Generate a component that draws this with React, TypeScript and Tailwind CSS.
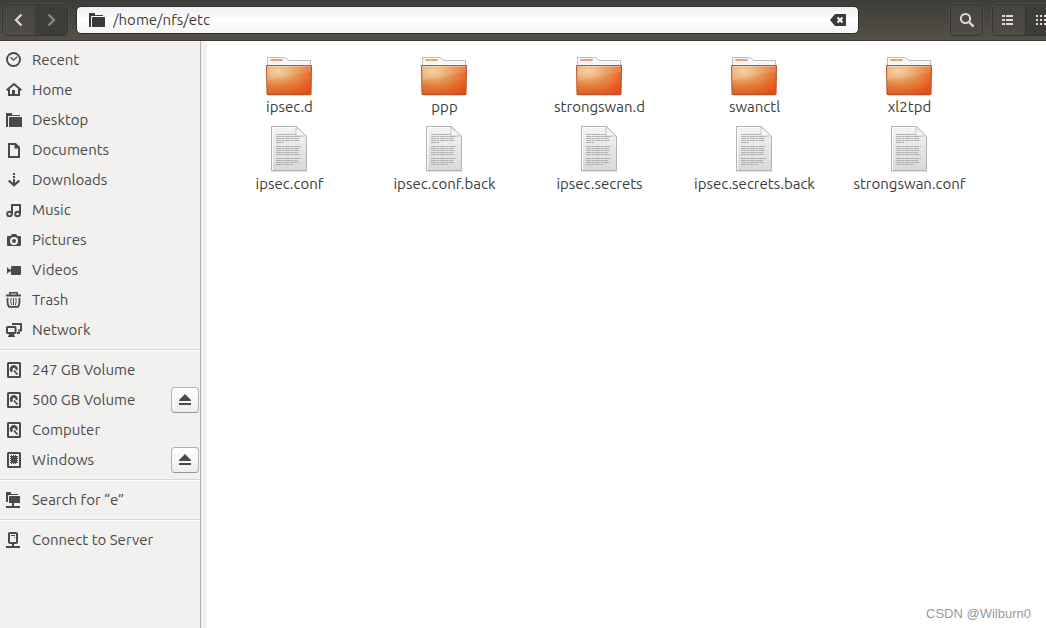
import type { ReactNode } from "react";

const INK = "#4a4a4a";

function Glyph({ children }: { children: ReactNode }) {
  return (
    <svg width="16" height="16" viewBox="0 0 16 16" fill="currentColor" className="shrink-0" aria-hidden="true">
      {children}
    </svg>
  );
}

const FolderShape = () => (
  <>
    <path d="M0 1.5Q0 1 .5 1H5.5L6 1.5V3H13.5Q14 3 14 3.5V4H3Q2 4 2 5V15H.5Q0 15 0 14.5Z" />
    <rect x="3" y="5" width="13" height="10" rx=".6" />
  </>
);

const icons = {
  recent: (
    <Glyph>
      <circle cx="7.5" cy="7.5" r="6.5" fill="none" stroke="currentColor" strokeWidth="1.9" />
      <path d="M4.5 5.2 7.5 8.2 11.2 4.8" fill="none" stroke="currentColor" strokeWidth="1.3" />
    </Glyph>
  ),
  home: (
    <Glyph>
      <path d="M.6 8.2 8 2l7.4 6.2" fill="none" stroke="currentColor" strokeWidth="2" />
      <path d="M2 7h2v5h2V8h3v4h3V7h2v7H2z" />
    </Glyph>
  ),
  folder: (
    <Glyph>
      <FolderShape />
    </Glyph>
  ),
  documents: (
    <Glyph>
      <path d="M3 2h6.5L13 5.500V15H3Z" fill="none" stroke="currentColor" strokeWidth="2" />
      <path d="M8.500 1.500V6.500H13.500Z" />
    </Glyph>
  ),
  downloads: (
    <Glyph>
      <path d="M7 1h2v2H7zM7 4h2v2H7zM7 7h2v5H7z" />
      <path d="M2.700 8.500 8 13.300 13.300 8.500" fill="none" stroke="currentColor" strokeWidth="2.300" />
    </Glyph>
  ),
  music: (
    <Glyph>
      <path d="M6 12V6.500M6 7V3H14V12" fill="none" stroke="currentColor" strokeWidth="2" />
      <circle cx="3.500" cy="12" r="2.300" fill="none" stroke="currentColor" strokeWidth="2" />
      <circle cx="11.500" cy="12" r="2.300" fill="none" stroke="currentColor" strokeWidth="2" />
    </Glyph>
  ),
  pictures: (
    <Glyph>
      <path
        fillRule="evenodd"
        d="M2 4H4.500L6 2H10L11.500 4H14Q15 4 15 5V13Q15 14 14 14H2Q1 14 1 13V5Q1 4 2 4ZM8 5A4 4 0 1 0 8 13 4 4 0 1 0 8 5Z"
      />
      <circle cx="8" cy="9" r="2" />
    </Glyph>
  ),
  videos: (
    <Glyph>
      <rect x="5" y="4" width="10" height="9" rx="1" />
      <path d="M1 5 4.500 8.500 1 12Z" />
      <path d="M3 7.500h3v2H3z" />
    </Glyph>
  ),
  trash: (
    <Glyph>
      <path d="M0 2.500H3V1Q3 0 4 0H11Q12 0 12 1V2.500H15V4.500H0Z" />
      <path d="M4.500 1.500h6v1h-6z" fill="#f2f1f0" />
      <path d="M1.800 6C1.200 9 1.500 12.500 3 14.800H12C13.500 12.500 13.800 9 13.200 6" fill="none" stroke="currentColor" strokeWidth="1.800" />
      <path d="M5.200 6Q4.200 9.500 5.600 13M7.500 6V13M9.800 6Q10.800 9.500 9.400 13" fill="none" stroke="currentColor" strokeWidth="1" />
    </Glyph>
  ),
  network: (
    <Glyph>
      <path d="M7 3V2H15V8.500H12" fill="none" stroke="currentColor" strokeWidth="2" />
      <path d="M11 10h3v2h-3z" />
      <rect x="1" y="5" width="8.500" height="6" rx=".500" fill="none" stroke="currentColor" strokeWidth="2" />
      <path d="M3 12h5v1l1 1v1H2v-1l1-1z" />
    </Glyph>
  ),
  drive: (
    <Glyph>
      <rect x="2" y="1" width="12" height="14" rx=".600" fill="none" stroke="currentColor" strokeWidth="2" />
      <path fillRule="evenodd" d="M8 3A4 4 0 0 0 5.500 10.300L7 8.500A1.500 1.500 0 1 1 9.500 7.500L11.500 8.500A4 4 0 0 0 8 3Z" />
      <path d="M8 8.500 11.500 12.500" stroke="currentColor" strokeWidth="1.800" />
    </Glyph>
  ),
  chip: (
    <Glyph>
      <rect x="2" y="1" width="12" height="14" rx=".600" fill="none" stroke="currentColor" strokeWidth="2" />
      <rect x="5" y="4" width="6" height="7" />
      <path
        d="M5.500 3V12M7.500 3V12M9.500 3V12M4 4.500H12M4 6.500H12M4 8.500H12M4 10.500H12"
        stroke="currentColor"
        strokeWidth="1"
      />
    </Glyph>
  ),
  remoteFolder: (
    <Glyph>
      <path d="M0 .500Q0 0 .500 0H4.500L5 .500V2H11.500Q12 2 12 2.500V3H3Q2 3 2 4V10H.500Q0 10 0 9.500Z" />
      <rect x="3" y="4" width="11" height="7" rx=".500" />
      <path d="M6 11h2v3H6zM0 14h14v2H0z" />
    </Glyph>
  ),
  server: (
    <Glyph>
      <rect x="3" y="1" width="8" height="10" rx="1" fill="none" stroke="currentColor" strokeWidth="2" />
      <path d="M5 3h4v1H5zM8 5h1v1H8zM6 11h2v3H6zM0 14h14v2H0z" />
    </Glyph>
  ),
};

type Place = { label: string; icon: ReactNode; eject?: boolean };

const places: Place[][] = [
  [
    { label: "Recent", icon: icons.recent },
    { label: "Home", icon: icons.home },
    { label: "Desktop", icon: icons.folder },
    { label: "Documents", icon: icons.documents },
    { label: "Downloads", icon: icons.downloads },
    { label: "Music", icon: icons.music },
    { label: "Pictures", icon: icons.pictures },
    { label: "Videos", icon: icons.videos },
    { label: "Trash", icon: icons.trash },
    { label: "Network", icon: icons.network },
  ],
  [
    { label: "247 GB Volume", icon: icons.drive },
    { label: "500 GB Volume", icon: icons.drive, eject: true },
    { label: "Computer", icon: icons.drive },
    { label: "Windows", icon: icons.chip, eject: true },
  ],
  [{ label: "Search for “e”", icon: icons.remoteFolder }],
  [{ label: "Connect to Server", icon: icons.server }],
];

type Entry = { name: string; kind: "folder" | "file" };

const entries: Entry[] = [
  { name: "ipsec.d", kind: "folder" },
  { name: "ppp", kind: "folder" },
  { name: "strongswan.d", kind: "folder" },
  { name: "swanctl", kind: "folder" },
  { name: "xl2tpd", kind: "folder" },
  { name: "ipsec.conf", kind: "file" },
  { name: "ipsec.conf.back", kind: "file" },
  { name: "ipsec.secrets", kind: "file" },
  { name: "ipsec.secrets.back", kind: "file" },
  { name: "strongswan.conf", kind: "file" },
];

function Defs() {
  return (
    <svg width="0" height="0" className="absolute" aria-hidden="true">
      <defs>
        <radialGradient id="folderFront" cx=".25" cy=".2" r=".95">
          <stop offset="0" stopColor="#f4cb95" />
          <stop offset=".5" stopColor="#e58f4c" />
          <stop offset="1" stopColor="#f04a14" />
        </radialGradient>
        <linearGradient id="folderShade" x1="0" y1="0" x2="0" y2="1">
          <stop offset=".4" stopColor="#d0581c" stopOpacity="0" />
          <stop offset="1" stopColor="#d0581c" stopOpacity=".4" />
        </linearGradient>
        <linearGradient id="paper" x1="0" y1="0" x2="0" y2="1">
          <stop offset="0" stopColor="#f4f4f4" />
          <stop offset="1" stopColor="#d9d9d9" />
        </linearGradient>
        <linearGradient id="fold" x1="0" y1="1" x2="1" y2="0">
          <stop offset="0" stopColor="#ffffff" />
          <stop offset=".35" stopColor="#f6f6f6" />
          <stop offset="1" stopColor="#b4b4b4" />
        </linearGradient>
      </defs>
    </svg>
  );
}

function FolderIcon() {
  return (
    <svg width="48" height="48" viewBox="1 0 48 48" aria-hidden="true">
      <path d="M3 47.500H45" stroke="#000" strokeOpacity=".15" />
      <path d="M2.500 20V9.500H19.500Q21 9.500 22 11T25 12.500H45.500V20Z" fill="#f8f8f8" stroke="#bdbdbd" />
      <rect x="5" y="11" width="13" height="2" rx="1" fill="#f0a070" />
      <path d="M1.500 17.500H46.500L46 46.500H2Z" fill="url(#folderFront)" />
      <path d="M1.500 17.500H46.500L46 46.500H2Z" fill="url(#folderShade)" stroke="#b4552c" />
      <path d="M2 18H46V24Q26 27 2 33Z" fill="#fff" fillOpacity=".12" />
      <path d="M2.500 18.500H45.500" stroke="#fff" strokeOpacity=".35" />
    </svg>
  );
}

function FileIcon() {
  const lines = [
    [9, 20], [11, 25], [13, 23], [15, 24], [17, 8],
    [21, 25], [23, 23], [25, 24], [27, 22], [29, 24],
    [33, 25], [35, 22], [37, 23], [39, 17],
  ];
  return (
    <svg width="48" height="48" viewBox="1 0 48 48" aria-hidden="true">
      <path d="M6 46.500H43" stroke="#000" strokeOpacity=".12" />
      <path d="M6.500 1.500H31.500L41.500 11.500V45.500H6.500Z" fill="url(#paper)" stroke="#b3b3b3" />
      <path d="M7.500 45V2.500H31" fill="none" stroke="#fff" />
      {lines.map(([y, w]) => (
        <path key={y} d={`M11 ${y + 0.5}h${w}`} stroke="#b0b0b0" strokeDasharray="5 .500 3 .500" />
      ))}
      <path d="M31 1.500V9.500Q31 11.500 33 11H41.500Z" fill="url(#fold)" stroke="#b3b3b3" strokeWidth=".700" />
    </svg>
  );
}

export default function App() {
  return (
    <div className="relative flex min-h-screen flex-col overflow-hidden bg-white font-['Ubuntu','Noto_Sans',sans-serif] text-[15px] text-[#3c3c3c]">
      <Defs />
      <header className="flex h-[41px] items-center border-b border-[#3a3934] bg-linear-to-b from-[#3d3c38] to-[#545047] pl-[2px]">
        <nav className="flex h-8 w-[66px] shrink-0 overflow-hidden rounded-[5px] border border-[#35342f] shadow-[0_0_0_1px_#504e48]" aria-label="History">
          <button type="button" aria-label="Back" className="flex flex-1 items-center justify-center bg-linear-to-b from-[#45443f] to-[#4e4c45] text-[#dfdbd2]">
            <svg width="16" height="16" viewBox="0 0 16 16" aria-hidden="true">
              <path d="M10.500 2.500 5 8l5.500 5.500" fill="none" stroke="currentColor" strokeWidth="2.200" />
            </svg>
          </button>
          <button type="button" aria-label="Forward" disabled className="flex flex-1 items-center justify-center bg-[#3e3d39] text-[#8b8983]">
            <svg width="16" height="16" viewBox="0 0 16 16" aria-hidden="true">
              <path d="M5.500 2.500 11 8l-5.500 5.500" fill="none" stroke="currentColor" strokeWidth="2.200" />
            </svg>
          </button>
        </nav>
        <div className="ml-2 flex h-7 min-w-0 flex-1 items-center rounded-[5px] border border-[#2f2e2a] bg-linear-to-b from-[#f0f0f0] via-white to-[#f5f5f5] px-3 text-[#3b3b3b]">
          {icons.folder}
          <input
            aria-label="Location"
            defaultValue="/home/nfs/etc"
            className="ml-2 h-5 min-w-0 flex-1 bg-transparent text-[15px] leading-5 outline-none"
          />
          <button type="button" aria-label="Clear location">
            <svg width="16" height="16" viewBox="0 0 16 16" fill="currentColor" aria-hidden="true">
              <path d="M0 8 5 2H15Q16 2 16 3V13Q16 14 15 14H5Z" />
              <path d="m7.500 5.500 5 5m0-5-5 5" stroke="#fff" strokeWidth="2" />
            </svg>
          </button>
        </div>
        <button type="button" aria-label="Search" className="ml-[91px] flex h-8 w-[33px] shrink-0 items-center justify-center rounded-[5px] border border-[#35342f] bg-linear-to-b from-[#45443f] to-[#4e4c45] text-[#dfdbd2] shadow-[0_0_0_1px_#504e48]">
          <svg width="16" height="16" viewBox="0 0 16 16" fill="none" stroke="currentColor" aria-hidden="true">
            <circle cx="6.500" cy="6.500" r="4.600" strokeWidth="2" />
            <path d="m10 10 4.600 4.600" strokeWidth="2.400" />
          </svg>
        </button>
        <div className="ml-[9px] -mr-3 flex h-8 w-[66px] shrink-0 overflow-hidden rounded-[5px] border border-[#35342f] shadow-[0_0_0_1px_#504e48]" role="group" aria-label="View">
          <button type="button" aria-label="List view" className="flex flex-1 items-center justify-center border-r border-[#35342f] bg-linear-to-b from-[#45443f] to-[#4e4c45] text-[#dfdbd2]">
            <Glyph>
              <path d="M1 3h3v2H1zM5 3h7v2H5zM1 7h3v2H1zM5 7h7v2H5zM1 11h3v2H1zM5 11h7v2H5z" />
            </Glyph>
          </button>
          <button type="button" aria-label="Grid view" aria-pressed="true" className="flex flex-1 items-center justify-center bg-[#3e3d39] text-[#dfdbd2]">
            <Glyph>
              <path d="M3 3h2v2H3zM7 3h2v2H7zM11 3h2v2h-2zM3 7h2v2H3zM7 7h2v2H7zM11 7h2v2h-2zM3 11h2v2H3zM7 11h2v2H7zM11 11h2v2h-2z" />
            </Glyph>
          </button>
        </div>
      </header>

      <div className="flex flex-1">
        <aside className="w-[201px] shrink-0 border-r border-[#b4b2ae] bg-[#f2f1f0] pt-1 text-[#4a4a4a]">
          {places.map((group, i) => (
            <ul key={i} className={i > 0 ? "mt-1 border-t border-[#d9d7d5] pt-[5px] shadow-[inset_0_1px_0_#fff]" : ""}>
              {group.map((p) => (
                <li key={p.label} className="flex h-[30px] items-center pr-px pl-[6px]">
                  <a href="#" className="flex flex-1 items-center gap-[10px]">
                    {p.icon}
                    <span>{p.label}</span>
                  </a>
                  {p.eject && (
                    <button
                      type="button"
                      aria-label={`Eject ${p.label}`}
                      className="flex h-[26px] w-7 items-center justify-center rounded-[4px] border border-[#b5b3b0] border-b-[#989693] bg-linear-to-b from-white to-[#ededec]"
                    >
                      <svg width="14" height="14" viewBox="0 0 14 14" fill={INK} aria-hidden="true">
                        <path d="M7 1 13 7V8H1V7ZM1 10H13V12H1Z" />
                      </svg>
                    </button>
                  )}
                </li>
              ))}
            </ul>
          ))}
        </aside>
        <main className="flex-1 border-l-[6px] border-[#f2f1f0] bg-white pt-[7px] pl-[5px]">
          <ul className="grid grid-cols-[repeat(auto-fill,155px)] gap-y-2">
            {entries.map((e) => (
              <li key={e.name} className="flex flex-col items-center">
                {e.kind === "folder" ? <FolderIcon /> : <FileIcon />}
                <span className="mt-px leading-5">{e.name}</span>
              </li>
            ))}
          </ul>
        </main>
      </div>
      <p className="absolute right-[15px] bottom-1 font-['Liberation_Sans',sans-serif] text-[13px] leading-5 text-[#999999]">
        CSDN @Wilburn0
      </p>
    </div>
  );
}
